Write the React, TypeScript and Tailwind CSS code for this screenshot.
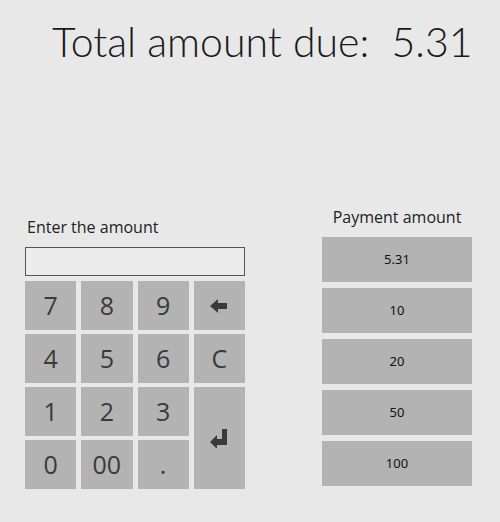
import React from "react";

const keyCls =
  "bg-[#b3b3b3] flex items-center justify-center text-[25px] text-[#3a3a3a] leading-none";

function BackIcon() {
  return (
    <svg width="18" height="14" viewBox="0 0 18 14">
      <path d="M0 7 L8 0 L8 4 L17 4 L17 10 L8 10 L8 14 Z" fill="#3a3a3a" />
    </svg>
  );
}

function EnterIcon() {
  return (
    <svg width="18" height="19" viewBox="0 0 18 19">
      <path
        d="M0 13 L7 6 L7 10 L12 10 L12 0 L17 0 L17 16 L7 16 L7 20 Z"
        fill="#3a3a3a"
      />
    </svg>
  );
}

export default function App() {
  return (
    <div
      className="w-[500px] h-[522px] bg-[#e8e8e8] flex flex-col"
      style={{ fontFamily: '"Open Sans", "Noto Sans", sans-serif' }}
    >
      <div
        className="pl-[52px] pt-[17px] text-[41px] font-light text-[#1a1a1a] leading-[50px] whitespace-pre"
        style={{ fontFamily: 'Lato, "Open Sans", sans-serif' }}
      >
        Total amount due:  5.31
      </div>
      <div className="flex mt-[142px]">
        <div className="ml-[25px] w-[220px] flex flex-col">
          <div className="mt-[8px] ml-[2px] text-[16px] text-[#222] leading-[20px]">
            Enter the amount
          </div>
          <div className="mt-[10px] h-[29px] border-[1.5px] border-[#555] bg-[#ececec]" />
          <div className="mt-[5px] grid grid-cols-4 grid-rows-[49px_49px_49px_49px] gap-x-[5px] gap-y-[4px]">
            <div className={keyCls}>7</div>
            <div className={keyCls}>8</div>
            <div className={keyCls}>9</div>
            <div className={keyCls}>
              <BackIcon />
            </div>
            <div className={keyCls}>4</div>
            <div className={keyCls}>5</div>
            <div className={keyCls}>6</div>
            <div className={keyCls}>C</div>
            <div className={keyCls}>1</div>
            <div className={keyCls}>2</div>
            <div className={keyCls}>3</div>
            <div className={keyCls + " row-span-2"}>
              <EnterIcon />
            </div>
            <div className={keyCls}>0</div>
            <div className={keyCls}>00</div>
            <div className={keyCls + " items-end pb-[12px]"}>.</div>
          </div>
        </div>
        <div className="ml-[77px] w-[150px] flex flex-col">
          <div className="text-center text-[16px] text-[#222] leading-[20px] -mt-[2px]">
            Payment amount
          </div>
          <div className="mt-[10px] flex flex-col gap-[6px]">
            {["5.31", "10", "20", "50", "100"].map((v) => (
              <div
                key={v}
                className="h-[45px] bg-[#b3b3b3] flex items-center justify-center text-[13px] font-normal text-[#111]"
                style={{ fontFamily: '"Noto Sans", sans-serif' }}
              >
                {v}
              </div>
            ))}
          </div>
        </div>
      </div>
    </div>
  );
}
